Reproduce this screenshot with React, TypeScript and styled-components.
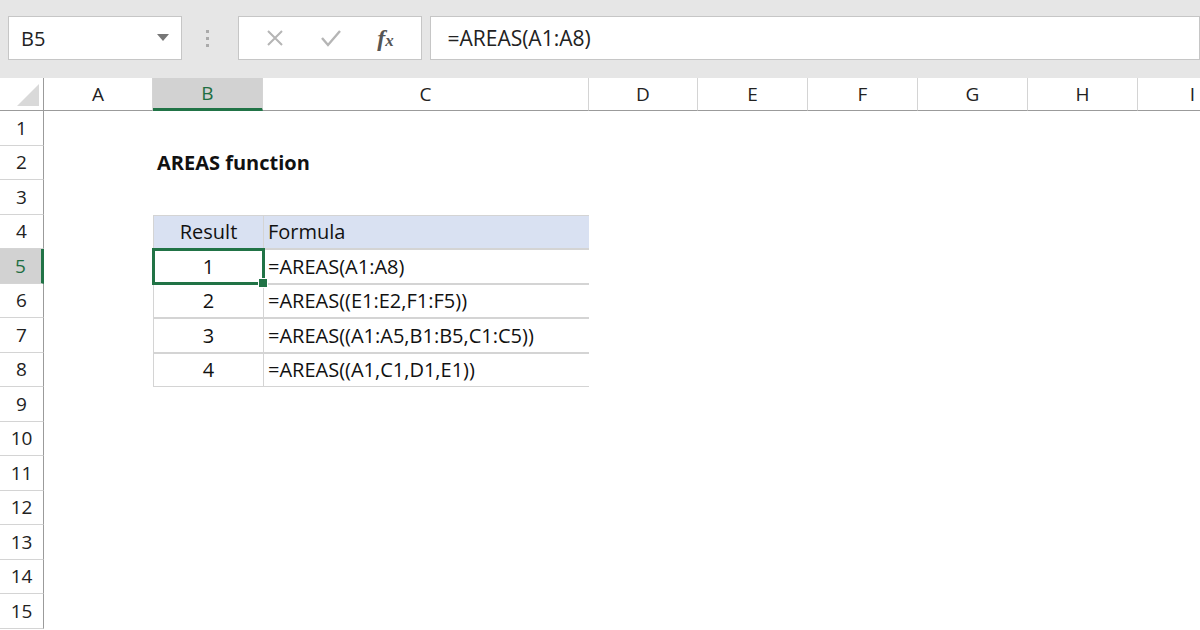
import React from "react";
import styled, { createGlobalStyle } from "styled-components";

const G = createGlobalStyle`
  body { margin:0; font-family: "Open Sans", "Liberation Sans", sans-serif; background:#fff; overflow:hidden; }
`;
const Page = styled.div`width:1200px;height:630px;overflow:hidden;display:flex;flex-direction:column;`;
const Bar = styled.div`height:78px;background:#e6e6e6;display:flex;align-items:flex-start;padding-top:16px;box-sizing:border-box;`;
const Box = styled.div<{ w: number; ml: number }>`
  width:${p => p.w}px;margin-left:${p => p.ml}px;height:44px;background:#fff;border:1px solid #c6c6c6;box-sizing:border-box;
  display:flex;align-items:center;font-size:20px;color:#222;
`;
const Dots = styled.div`margin-left:22px;width:8px;height:44px;display:flex;flex-direction:column;justify-content:center;align-items:center;gap:4px;
  span{width:3px;height:3px;background:#aaa;display:block;}`;
const Grid = styled.div<{ cols: string }>`display:grid;grid-template-columns:${p => p.cols};padding-top:0;`;
const ColHead = styled.div<{ sel?: boolean }>`
  height:33px;box-sizing:border-box;background:${p => (p.sel ? "#d2d2d2" : "#fff")};
  border-right:1px solid #d4d4d4;border-bottom:${p => (p.sel ? "3px solid #217346" : "1px solid #9b9b9b")};
  display:flex;align-items:center;justify-content:center;font-size:19px;color:${p => (p.sel ? "#1e6e42" : "#222")};
`;
const Corner = styled.div`height:33px;background:#fff;border-right:1px solid #9b9b9b;border-bottom:1px solid #9b9b9b;box-sizing:border-box;position:relative;
  &:after{content:"";position:absolute;right:4px;bottom:4px;border-left:22px solid transparent;border-bottom:22px solid #d9d9d9;}`;
const RowHead = styled.div<{ sel?: boolean }>`
  height:34.5px;box-sizing:border-box;background:${p => (p.sel ? "#d2d2d2" : "#fff")};
  border-right:${p => (p.sel ? "3px solid #217346" : "1px solid #9b9b9b")};border-bottom:1px solid #d4d4d4;
  display:flex;align-items:center;justify-content:center;font-size:19px;color:${p => (p.sel ? "#1e6e42" : "#222")};
`;
const Cell = styled.div<{ bg?: string; align?: string; bold?: boolean; border?: boolean; selc?: boolean }>`
  height:34.5px;box-sizing:border-box;position:relative;background:${p => p.bg || "#fff"};
  display:flex;align-items:center;justify-content:${p => p.align || "flex-start"};padding:0 4px;
  font-size:20px;color:#111;font-weight:${p => (p.bold ? 700 : 400)};white-space:nowrap;overflow:visible;
  ${p => (p.bold ? "z-index:3;" : "")}
  ${p => (p.border ? "border:1px solid #d4d4d4;margin:0 -1px -1px 0;" : "")}
  ${p => (p.selc ? `outline:3px solid #217346;outline-offset:-2px;z-index:2;
    &:after{content:"";position:absolute;right:-5px;bottom:-5px;width:8px;height:8px;background:#217346;border:1px solid #fff;}` : "")}
`;

const cols = [
  ["A", 109], ["B", 110], ["C", 326], ["D", 109], ["E", 110], ["F", 110], ["G", 110], ["H", 110], ["I", 110],
] as const;
const colTpl = "44px " + cols.map(c => c[1] + "px").join(" ");

const data: Record<number, string[]> = {
  4: ["Result", "Formula"],
  5: ["1", "=AREAS(A1:A8)"],
  6: ["2", "=AREAS((E1:E2,F1:F5))"],
  7: ["3", "=AREAS((A1:A5,B1:B5,C1:C5))"],
  8: ["4", "=AREAS((A1,C1,D1,E1))"],
};

export default function App() {
  const rows = Array.from({ length: 15 }, (_, i) => i + 1);
  return (
    <Page>
      <G />
      <Bar>
        <Box w={176} ml={8} style={{ justifyContent: "space-between", padding: "0 12px" }}>
          <span>B5</span>
          <svg width="12" height="8"><path d="M0 0h12L6 7z" fill="#777" /></svg>
        </Box>
        <Dots><span /><span /><span /></Dots>
        <Box w={187} ml={26} style={{ justifyContent: "space-around", padding: "0 10px" }}>
          <svg width="18" height="18" viewBox="0 0 18 18"><path d="M2 2L16 16M16 2L2 16" stroke="#b5b5b5" strokeWidth="2" /></svg>
          <svg width="22" height="18" viewBox="0 0 22 18"><path d="M2 9l6 7L20 2" stroke="#b5b5b5" strokeWidth="2.4" fill="none" /></svg>
          <span style={{ fontFamily: "'Liberation Serif',serif", fontStyle: "italic", fontWeight: 700, fontSize: 24, color: "#555" }}>f<span style={{ fontSize: 17 }}>x</span></span>
        </Box>
        <Box w={780} ml={8} style={{ padding: "0 16px", fontSize: 21 }}>=AREAS(A1:A8)</Box>
      </Bar>
      <Grid cols={colTpl}>
        <Corner />
        {cols.map(c => <ColHead key={c[0]} sel={c[0] === "B"}>{c[0]}</ColHead>)}
        {rows.map(r => (
          <React.Fragment key={r}>
            <RowHead sel={r === 5}>{r}</RowHead>
            {cols.map((c, ci) => {
              const d = data[r];
              if (r === 2 && ci === 1) return <Cell key={ci} bold>AREAS function</Cell>;
              if (d && (ci === 1 || ci === 2)) {
                return (
                  <Cell key={ci} border bg={r === 4 ? "#d9e1f2" : undefined}
                    align={ci === 1 ? "center" : "flex-start"} selc={r === 5 && ci === 1}>
                    {d[ci - 1]}
                  </Cell>
                );
              }
              return <Cell key={ci} />;
            })}
          </React.Fragment>
        ))}
      </Grid>
    </Page>
  );
}
